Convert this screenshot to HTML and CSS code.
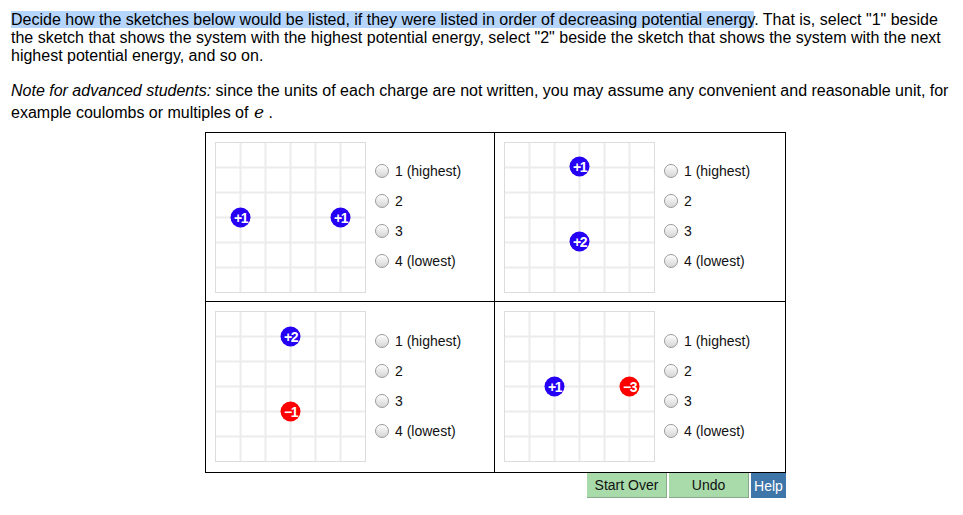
FILE: index.html
```html
<!DOCTYPE html>
<html>
<head>
<meta charset="utf-8">
<link rel="stylesheet" href="styles.css">
</head>
<body>
<p class="intro"><span class="hl">Decide how the sketches below would be listed, if they were listed in order of decreasing potential energy</span>. That is, select "1" beside the sketch that shows the system with the highest potential energy, select "2" beside the sketch that shows the system with the next highest potential energy, and so on.</p>
<p class="note"><em>Note for advanced students:</em> since the units of each charge are not written, you may assume any convenient and reasonable unit, for example coulombs or multiples of <span class="math">e</span> .</p>

<div class="problem">
  <div class="board">
    <div class="cell">
      <svg class="sketch" width="151" height="151" viewBox="0 0 151 151">
        <g class="lines">
          <path d="M25.5 0V151M50.5 0V151M75.5 0V151M100.5 0V151M125.5 0V151M0 25.5H151M0 50.5H151M0 75.5H151M0 100.5H151M0 125.5H151"/>
        </g>
        <rect class="frame" x="0.5" y="0.5" width="150" height="150"/>
        <circle class="pos" cx="25.5" cy="75.5" r="10"/><text class="q" x="25.5" y="75.5">+1</text>
        <circle class="pos" cx="125.5" cy="75.5" r="10"/><text class="q" x="125.5" y="75.5">+1</text>
      </svg>
      <div class="choices">
        <label class="opt"><input type="radio" name="a"> 1 (highest)</label>
        <label class="opt"><input type="radio" name="a"> 2</label>
        <label class="opt"><input type="radio" name="a"> 3</label>
        <label class="opt"><input type="radio" name="a"> 4 (lowest)</label>
      </div>
    </div>
    <div class="cell">
      <svg class="sketch" width="151" height="151" viewBox="0 0 151 151">
        <g class="lines">
          <path d="M25.5 0V151M50.5 0V151M75.5 0V151M100.5 0V151M125.5 0V151M0 25.5H151M0 50.5H151M0 75.5H151M0 100.5H151M0 125.5H151"/>
        </g>
        <rect class="frame" x="0.5" y="0.5" width="150" height="150"/>
        <circle class="pos" cx="75.5" cy="24.5" r="10"/><text class="q" x="75.5" y="24.5">+1</text>
        <circle class="pos" cx="75.5" cy="99.5" r="10"/><text class="q" x="75.5" y="99.5">+2</text>
      </svg>
      <div class="choices">
        <label class="opt"><input type="radio" name="b"> 1 (highest)</label>
        <label class="opt"><input type="radio" name="b"> 2</label>
        <label class="opt"><input type="radio" name="b"> 3</label>
        <label class="opt"><input type="radio" name="b"> 4 (lowest)</label>
      </div>
    </div>
    <div class="cell lower">
      <svg class="sketch" width="151" height="151" viewBox="0 0 151 151">
        <g class="lines">
          <path d="M25.5 0V151M50.5 0V151M75.5 0V151M100.5 0V151M125.5 0V151M0 25.5H151M0 50.5H151M0 75.5H151M0 100.5H151M0 125.5H151"/>
        </g>
        <rect class="frame" x="0.5" y="0.5" width="150" height="150"/>
        <circle class="pos" cx="75.5" cy="25.5" r="10"/><text class="q" x="75.5" y="25.5">+2</text>
        <circle class="neg" cx="75.5" cy="100.5" r="10"/><text class="q" x="75.5" y="100.5">−1</text>
      </svg>
      <div class="choices">
        <label class="opt"><input type="radio" name="c"> 1 (highest)</label>
        <label class="opt"><input type="radio" name="c"> 2</label>
        <label class="opt"><input type="radio" name="c"> 3</label>
        <label class="opt"><input type="radio" name="c"> 4 (lowest)</label>
      </div>
    </div>
    <div class="cell lower">
      <svg class="sketch" width="151" height="151" viewBox="0 0 151 151">
        <g class="lines">
          <path d="M25.5 0V151M50.5 0V151M75.5 0V151M100.5 0V151M125.5 0V151M0 25.5H151M0 50.5H151M0 75.5H151M0 100.5H151M0 125.5H151"/>
        </g>
        <rect class="frame" x="0.5" y="0.5" width="150" height="150"/>
        <circle class="pos" cx="50.5" cy="75.5" r="10"/><text class="q" x="50.5" y="75.5">+1</text>
        <circle class="neg" cx="125.5" cy="75.5" r="10"/><text class="q" x="125.5" y="75.5">−3</text>
      </svg>
      <div class="choices">
        <label class="opt"><input type="radio" name="d"> 1 (highest)</label>
        <label class="opt"><input type="radio" name="d"> 2</label>
        <label class="opt"><input type="radio" name="d"> 3</label>
        <label class="opt"><input type="radio" name="d"> 4 (lowest)</label>
      </div>
    </div>
  </div>
  <div class="actions">
    <button class="btn green wide">Start Over</button>
    <button class="btn green wide">Undo</button>
    <button class="btn help">Help</button>
  </div>
</div>
</body>
</html>
```
FILE: styles.css
```css
html, body {
  margin: 0;
  background: #fff;
}
body {
  padding: 11px 14px 0 11px;
  font-family: "Liberation Sans", Arial, Helvetica, sans-serif;
  font-size: 16px;
  color: #000;
}
.intro {
  margin: 0;
  line-height: 18px;
}
.hl {
  background: #b5d5fc;
}
.note {
  margin: 15px 0 0;
  line-height: 22px;
}
.note em {
  font-style: italic;
}
.math {
  font-family: "DejaVu Serif", "Liberation Serif", serif;
  font-style: italic;
  font-size: 17px;
  line-height: 1;
  margin-left: 1px;
}
.problem {
  margin: 8px 0 0 194px;
  width: fit-content;
}
.board {
  display: grid;
  grid-template-columns: 288px 290px;
  grid-template-rows: 168px 170px;
  gap: 1px;
  background: #000;
  border: 1px solid #000;
}
.cell {
  background: #fff;
  padding: 9px;
  display: flex;
  align-items: flex-start;
}
.sketch {
  display: block;
  flex: none;
}
.lines path {
  stroke: #ececec;
  stroke-width: 2;
  fill: none;
}
.frame {
  fill: none;
  stroke: #dcdcdc;
  stroke-width: 1;
}
.pos { fill: #2500f4; }
.neg { fill: #f00; }
.q {
  fill: #fff;
  font-family: "Liberation Sans", Arial, sans-serif;
  font-weight: bold;
  font-size: 14px;
  letter-spacing: -1.5px;
  text-anchor: middle;
  dominant-baseline: central;
}
.choices {
  display: flex;
  flex-direction: column;
  margin: 14px 0 0 9px;
}
.lower .choices {
  margin-top: 15px;
}
.opt {
  display: flex;
  align-items: center;
  height: 30px;
  font-size: 14px;
  color: #111;
}
.opt input {
  -webkit-appearance: none;
  appearance: none;
  width: 14px;
  height: 14px;
  margin: 0 6px 0 0;
  border-radius: 50%;
  border: 1px solid #9a9a9a;
  background: linear-gradient(#fdfdfd, #d6d6d6);
  box-shadow: inset 0 1px 1px rgba(255,255,255,0.8);
  box-sizing: border-box;
}
.actions {
  display: flex;
  justify-content: flex-end;
  gap: 2px;
}
.btn {
  font-family: "Liberation Sans", Arial, sans-serif;
  font-size: 14px;
  height: 25px;
  padding: 0 3px;
  margin: 0;
  border: none;
  color: #111;
}
.green {
  background: #a8dba9;
  border-right: 1px solid #8aa88c;
  border-bottom: 1px solid #8aa88c;
}
.wide {
  width: 80px;
}
.help {
  background: #3f76a9;
  color: #fff;
  width: 35px;
}
```
